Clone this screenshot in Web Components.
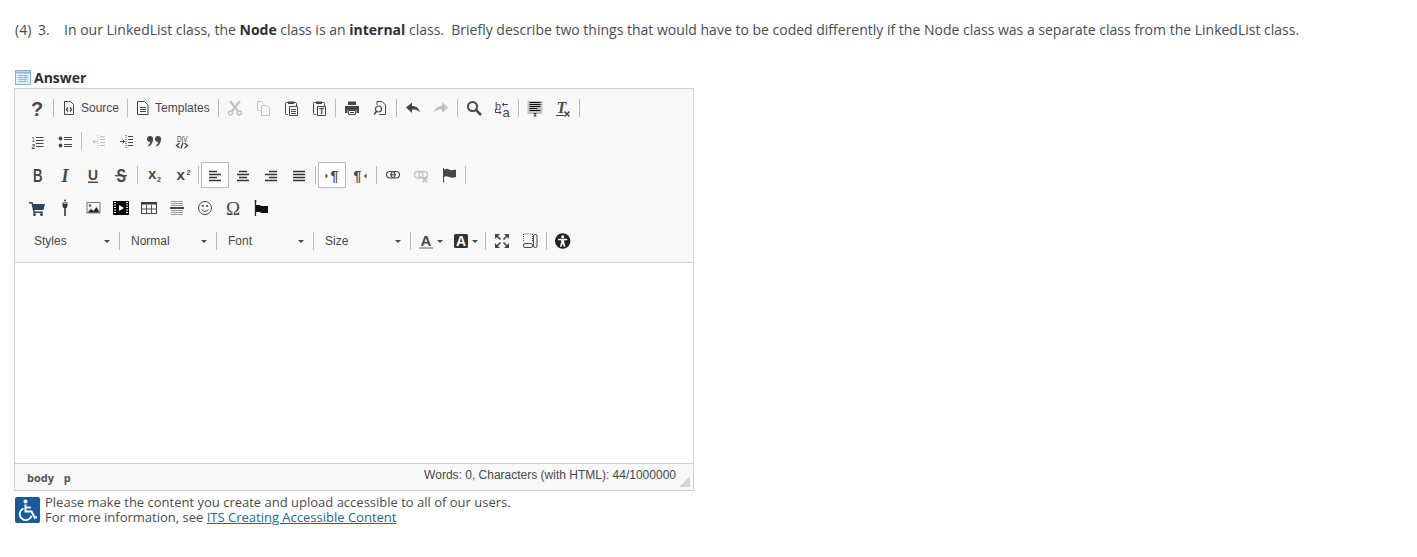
<!DOCTYPE html>
<html lang="en">
<head>
<meta charset="utf-8">
<title>Question</title>
<style>
    html, body { margin: 0; padding: 0; background: #fff; }
    body { font-family: "Open Sans", sans-serif; color: #494c4e; }
</style>
</head>
<body>

<template id="quiz-question-template">
    <style>
        :host { display: block; padding: 20px 0 0 15px; height: 30px; font-size: 14px; line-height: 20px; }
        .row { display: flex; }
        .points { width: 23px; }
        .num { width: 26px; }
        ::slotted(b) { color: #2d2f31; }
    </style>
    <div class="row">
        <span class="points">(4)</span>
        <span class="num">3.</span>
        <span><slot></slot></span>
    </div>
</template>

<template id="answer-label-template">
    <style>
        :host { display: flex; align-items: center; gap: 3px; height: 20px; margin: 17px 0 1px 15px; font-size: 14px; font-weight: 700; color: #2d2f31; }
    </style>
    <svg width="16" height="16" viewBox="0 0 16 16">
        <rect x="0.5" y="1.5" width="15" height="14" fill="#e6f0fa" stroke="#86aed6"/>
        <path d="M1 3.5h14" stroke="#8db5dc" stroke-width="2"/>
        <path d="M3 6.5h10M3 8.5h10M3 10.5h10M3 12.5h10M6 5.5v8M10 5.5v8" stroke="#9cbcdc"/>
    </svg>
    <slot></slot>
</template>

<template id="tb-button-template">
    <style>
        :host { display: inline-flex; align-items: center; justify-content: center; box-sizing: border-box; width: 28px; height: 26px; flex: none; }
        :host([label]) { width: auto; justify-content: flex-start; padding: 0 6px 0 5px; gap: 4px; }
        :host([label]) slot { display: block; margin-bottom: 1px; }
        :host([on]) { background: #fff; border: 1px solid #bcbcbc; }
        :host([disabled]) .ic { opacity: 0.3; }
        :host([caret]) { width: 35px; justify-content: flex-start; padding-left: 5px; gap: 3px; }
        .caret { display: none; width: 0; height: 0; border: 3px solid transparent; border-top-color: #484848; border-bottom: 0; }
        :host([caret]) .caret { display: block; }
        slot { font: 12px "Liberation Sans", Arial, sans-serif; color: #484848; }
    </style>
    <tb-icon class="ic"></tb-icon><slot></slot><span class="caret"></span>
</template>

<template id="tb-sep-template">
    <style>
        :host { display: block; flex: none; width: 1px; height: 18px; margin: 0 2px; background: #bcbcbc; }
    </style>
</template>

<template id="tb-row-template">
    <style>
        :host { display: flex; align-items: center; height: 26px; }
    </style>
    <slot></slot>
</template>

<template id="tb-combo-template">
    <style>
        :host { display: flex; align-items: center; box-sizing: border-box; flex: none; width: 92px; height: 26px; padding-left: 9px; font: 12px "Liberation Sans", Arial, sans-serif; color: #484848; }
        .text { flex: 1; }
        .arrow { width: 0; height: 0; margin-right: 7px; border: 3px solid transparent; border-top-color: #484848; border-bottom: 0; }
    </style>
    <span class="text"><slot></slot></span>
    <span class="arrow"></span>
</template>

<template id="html-editor-template">
    <style>
        :host { display: block; box-sizing: border-box; width: 680px; margin-left: 14px; border: 1px solid #d1d1d1; }
        .toolbar { display: flex; flex-direction: column; gap: 7px; box-sizing: border-box; height: 174px; padding: 6px 0 0 8px; background: #f8f8f8; border-bottom: 1px solid #d1d1d1; }
        ::slotted(tb-row:nth-of-type(3)) { margin-top: 1px; }
        ::slotted(tb-row:nth-of-type(5)) { padding-left: 2px; }
        .content { height: 200px; background: #fff; border-bottom: 1px solid #d1d1d1; }
        .bottom { position: relative; display: flex; align-items: center; justify-content: space-between; box-sizing: border-box; height: 26px; padding: 0 17px 0 12px; background: #f8f8f8; }
        .path { font: 700 11px "Open Sans", sans-serif; color: #555; word-spacing: 7px; }
        .count { font: 12px "Liberation Sans", Arial, sans-serif; color: #484848; margin-top: -5px; }
        .grip { position: absolute; right: 3px; bottom: 3px; width: 0; height: 0; border-style: solid; border-width: 0 0 11px 11px; border-color: transparent transparent #d4d4d4 transparent; }
    </style>
    <div class="toolbar"><slot></slot></div>
    <div class="content"></div>
    <div class="bottom">
        <span class="path">body p</span>
        <span class="count"><slot name="count"></slot></span>
        <span class="grip"></span>
    </div>
</template>

<template id="access-note-template">
    <style>
        :host { display: flex; gap: 5px; margin: 4px 0 0 15px; font-size: 13px; line-height: 15px; color: #494c4e; }
        svg { flex: none; margin-top: 2px; }
        ::slotted(a) { color: #146a9a; }
    </style>
    <svg width="25" height="26" viewBox="0 0 25 26">
        <rect width="25" height="26" rx="2" fill="#1c5a9e"/>
        <circle cx="10.5" cy="4.5" r="2" fill="#fff"/>
        <path d="M10.5 7.5v7h6l3.4 6.4 2-1" fill="none" stroke="#fff" stroke-width="2"/>
        <path d="M10.8 10.5h5" stroke="#fff" stroke-width="1.8"/>
        <path d="M8.5 11.5a6 6 0 1 0 8 7.3" fill="none" stroke="#fff" stroke-width="1.8"/>
    </svg>
    <div><slot></slot></div>
</template>

<quiz-question>In our LinkedList class, the <b>Node</b> class is an <b>internal</b> class.&nbsp; Briefly describe two things that would have to be coded differently if the Node class was a separate class from the LinkedList class.</quiz-question>

<answer-label>Answer</answer-label>

<html-editor>
    <tb-row>
        <tb-button icon="help"></tb-button><tb-sep></tb-sep>
        <tb-button icon="source" label>Source</tb-button><tb-sep></tb-sep>
        <tb-button icon="templates" label>Templates</tb-button><tb-sep></tb-sep>
        <tb-button icon="cut" disabled></tb-button>
        <tb-button icon="copy" disabled></tb-button>
        <tb-button icon="paste"></tb-button>
        <tb-button icon="pastetext"></tb-button><tb-sep></tb-sep>
        <tb-button icon="print"></tb-button>
        <tb-button icon="preview"></tb-button><tb-sep></tb-sep>
        <tb-button icon="undo"></tb-button>
        <tb-button icon="redo" disabled></tb-button><tb-sep></tb-sep>
        <tb-button icon="find"></tb-button>
        <tb-button icon="replace"></tb-button><tb-sep></tb-sep>
        <tb-button icon="selectall"></tb-button>
        <tb-button icon="removeformat"></tb-button><tb-sep></tb-sep>
    </tb-row>
    <tb-row>
        <tb-button icon="numlist"></tb-button>
        <tb-button icon="bullist"></tb-button><tb-sep></tb-sep>
        <tb-button icon="outdent" disabled></tb-button>
        <tb-button icon="indent"></tb-button>
        <tb-button icon="quote"></tb-button>
        <tb-button icon="creatediv"></tb-button>
    </tb-row>
    <tb-row>
        <tb-button icon="bold"></tb-button>
        <tb-button icon="italic"></tb-button>
        <tb-button icon="underline"></tb-button>
        <tb-button icon="strike"></tb-button><tb-sep></tb-sep>
        <tb-button icon="sub"></tb-button>
        <tb-button icon="sup"></tb-button><tb-sep></tb-sep>
        <tb-button icon="alignleft" on></tb-button>
        <tb-button icon="aligncenter"></tb-button>
        <tb-button icon="alignright"></tb-button>
        <tb-button icon="alignjustify"></tb-button><tb-sep></tb-sep>
        <tb-button icon="ltr" on></tb-button>
        <tb-button icon="rtl"></tb-button><tb-sep></tb-sep>
        <tb-button icon="link"></tb-button>
        <tb-button icon="unlink" disabled></tb-button>
        <tb-button icon="anchor"></tb-button><tb-sep></tb-sep>
    </tb-row>
    <tb-row>
        <tb-button icon="cart"></tb-button>
        <tb-button icon="mic"></tb-button>
        <tb-button icon="image"></tb-button>
        <tb-button icon="film"></tb-button>
        <tb-button icon="table"></tb-button>
        <tb-button icon="hr"></tb-button>
        <tb-button icon="smiley"></tb-button>
        <tb-button icon="omega"></tb-button>
        <tb-button icon="flag"></tb-button>
    </tb-row>
    <tb-row>
        <tb-combo>Styles</tb-combo><tb-sep></tb-sep>
        <tb-combo>Normal</tb-combo><tb-sep></tb-sep>
        <tb-combo>Font</tb-combo><tb-sep></tb-sep>
        <tb-combo>Size</tb-combo><tb-sep></tb-sep>
        <tb-button icon="textcolor" caret></tb-button>
        <tb-button icon="bgcolor" caret></tb-button><tb-sep></tb-sep>
        <tb-button icon="maximize"></tb-button>
        <tb-button icon="showblocks"></tb-button><tb-sep></tb-sep>
        <tb-button icon="a11y"></tb-button>
    </tb-row>
    <span slot="count">Words: 0, Characters (with HTML): 44/1000000</span>
</html-editor>

<access-note>Please make the content you create and upload accessible to all of our users.<br>For more information, see <a href="#">ITS Creating Accessible Content</a></access-note>

<script type="module">
    const SANS = 'font-family="Liberation Sans, sans-serif"';
    const SERIF = 'font-family="Liberation Serif, serif"';
    const CLIP = `<path d="M5 2.5H3.5q-1 0-1 1v10q0 1 1 1H5" fill="none" stroke="currentColor"/><path d="M5 1.5h6V4H5z" fill="currentColor"/><path d="M11 2.5h1.5q1 0 1 1V6" fill="none" stroke="currentColor"/><path d="M6.5 6.5h8v9h-8z" fill="none" stroke="currentColor"/>`;
    // 16x16 toolbar icons, everything is drawn in currentColor unless it has its own colour
    const ICONS = {
        help: `<text x="8" y="15.5" text-anchor="middle" ${SANS} font-weight="700" font-size="20">?</text>`,
        source: `<path d="M3.5 1.5h6l3 3v10h-9z" fill="none" stroke="currentColor"/><path d="M7 7.5L5.5 9.5 7 11.5M9 7.5l1.5 2-1.5 2" fill="none" stroke="currentColor" stroke-width="1.3"/>`,
        templates: `<path d="M2.5 1.5h7l3.5 3.5v9.5H2.5z" fill="none" stroke="currentColor"/><path d="M5 7.5h6M5 9.5h6M5 11.5h6" stroke="currentColor"/>`,
        cut: `<path d="M3 1l8 10M13 1L5 11" stroke="currentColor" stroke-width="2.2"/><circle cx="3.5" cy="13" r="2" fill="none" stroke="currentColor" stroke-width="1.4"/><circle cx="12.5" cy="13" r="2" fill="none" stroke="currentColor" stroke-width="1.4"/>`,
        copy: `<path d="M2.5 1.5h4l2 2M2.5 1.5v9h3" fill="none" stroke="currentColor"/><path d="M6.5 5.5h5l3 3v7h-8z" fill="none" stroke="currentColor"/>`,
        paste: `${CLIP}<path d="M8 9.5h5M8 11.5h5M8 13.5h5" stroke="currentColor"/>`,
        pastetext: `${CLIP}<text x="10.5" y="14" text-anchor="middle" ${SANS} font-weight="700" font-size="8.5">T</text>`,
        print: `<path d="M4 1.5h8V5H4zM1 6h14v7h-2.5v-3h-9v3H1z" fill="currentColor"/><path d="M4.5 10.5h7v4h-7z" fill="none" stroke="currentColor"/><path d="M6 12.5h4" stroke="currentColor"/>`,
        preview: `<path d="M5 1.5h5l3.5 3.5v9.5H7" fill="none" stroke="currentColor"/><path d="M5 1.5V5" stroke="currentColor"/><circle cx="6.5" cy="9" r="3" fill="none" stroke="currentColor" stroke-width="1.2"/><path d="M4.5 11.5L2 14.5" stroke="currentColor" stroke-width="1.5"/>`,
        undo: `<path d="M1 7.5L7 2.5V6c4 0 7 2 8 6.5-2-2.5-4.5-3-8-3V13z" fill="currentColor"/>`,
        redo: `<path d="M15 7.5L9 2.5V6C5 6 2 8 1 12.5c2-2.5 4.5-3 8-3V13z" fill="currentColor"/>`,
        find: `<circle cx="6.5" cy="6.5" r="4.5" fill="none" stroke="currentColor" stroke-width="2"/><path d="M10 10l5 5" stroke="currentColor" stroke-width="2.5"/>`,
        replace: `<text x="1" y="10" ${SANS} font-size="11">b</text><text x="8.5" y="17" ${SANS} font-size="13">a</text><path d="M14 4.5H8.5M10 3L8.5 4.5 10 6M1.5 9v3.5H7M5.5 11L7 12.5 5.5 14" fill="none" stroke="currentColor"/>`,
        selectall: `<rect x="0.5" y="1" width="15" height="13" fill="#c4c4c4"/><path d="M2.5 2.5h11M2.5 4.5h11M2.5 6.5h11M2.5 8.5h8M2.5 10.5h11" stroke="#111"/><path d="M6.5 13.5h3M8 13.5v2.5M6.5 16h3" stroke="#1c1c1c" stroke-width="0.9"/>`,
        removeformat: `<text x="1.5" y="13" ${SERIF} font-style="italic" font-weight="700" font-size="16">T</text><path d="M1 15.5h8" stroke="currentColor"/><path d="M9.5 11.5l5 5M14.5 11.5l-5 5" stroke="currentColor" stroke-width="1.6"/>`,
        numlist: `<text x="2.5" y="8.5" ${SANS} font-size="6.5">1</text><text x="2.5" y="15.5" ${SANS} font-weight="700" font-size="6.5">2</text><path d="M7 4.5h7.5M7 7.5h7.5M7 10.5h7.5M7 13.5h7.5" stroke="currentColor"/>`,
        bullist: `<circle cx="3.5" cy="5.5" r="1.9" fill="currentColor"/><circle cx="3.5" cy="12.5" r="1.9" fill="currentColor"/><path d="M7 4.5h8M7 6.5h8M7 11.5h8M7 13.5h8" stroke="currentColor"/>`,
        outdent: `<path d="M8 2v13" stroke="currentColor" stroke-dasharray="1 1"/><path d="M7 8.5H3M5 6.5L3 8.5l2 2" fill="none" stroke="currentColor"/><path d="M10 3.5h5M10 6.5h5M10 9.5h5M10 12.5h5" stroke="currentColor"/>`,
        indent: `<path d="M8 2v13" stroke="currentColor" stroke-dasharray="1 1"/><path d="M2 8.5h4M4.5 6.5L6.5 8.5l-2 2" fill="none" stroke="currentColor"/><path d="M10 3.5h5M10 6.5h5M10 9.5h5M10 12.5h5" stroke="currentColor"/>`,
        quote: `<circle cx="4" cy="6" r="3" fill="currentColor"/><path d="M7 6q0 5-4 7.5l-1-1q2-1.5 2.5-4z" fill="currentColor"/><circle cx="12" cy="6" r="3" fill="currentColor"/><path d="M15 6q0 5-4 7.5l-1-1q2-1.5 2.5-4z" fill="currentColor"/>`,
        creatediv: `<text x="3" y="8.5" ${SANS} font-size="9.5" textLength="10.5" lengthAdjust="spacingAndGlyphs">DIV</text><path d="M5.5 10L2.5 12.5 5.5 15M10.5 10l3 2.5-3 2.5M9 9.5L7 15.5" fill="none" stroke="currentColor" stroke-width="1.4"/>`,
        bold: `<text x="4" y="15" ${SANS} font-weight="700" font-size="17.5" textLength="9.5" lengthAdjust="spacingAndGlyphs">B</text>`,
        italic: `<text x="8" y="14.5" text-anchor="middle" ${SERIF} font-style="italic" font-weight="700" font-size="18">I</text>`,
        underline: `<text x="3" y="12.5" ${SANS} font-weight="700" font-size="15.5" textLength="10" lengthAdjust="spacingAndGlyphs">U</text><path d="M3 15.2h10" stroke="currentColor" stroke-width="1.5"/>`,
        strike: `<text x="3.5" y="15" ${SANS} font-weight="700" font-size="17.5" textLength="9.5" lengthAdjust="spacingAndGlyphs">S</text><path d="M2 8.7h12" stroke="currentColor" stroke-width="1.3"/>`,
        sub: `<text x="2" y="12" ${SANS} font-weight="700" font-size="15">x</text><text x="11" y="15" ${SANS} font-weight="700" font-size="7">2</text>`,
        sup: `<text x="2.5" y="13" ${SANS} font-weight="700" font-size="15">x</text><text x="12.5" y="8" ${SANS} font-weight="700" font-size="7">2</text>`,
        alignleft: `<path d="M2 4.5h8M2 7.5h12M2 10.5h8M2 13.5h12" stroke="#333" stroke-width="1.6"/>`,
        aligncenter: `<path d="M4 4.5h8M2 7.5h12M4 10.5h8M2 13.5h12" stroke="#333" stroke-width="1.6"/>`,
        alignright: `<path d="M6 4.5h8M2 7.5h12M6 10.5h8M2 13.5h12" stroke="#333" stroke-width="1.6"/>`,
        alignjustify: `<path d="M2 4.5h12M2 7.5h12M2 10.5h12M2 13.5h12" stroke="#333" stroke-width="1.6"/>`,
        ltr: `<path d="M1.5 6.5v5L4 9z" fill="currentColor"/><text x="10.5" y="13.5" text-anchor="middle" ${SANS} font-weight="700" font-size="14">¶</text>`,
        rtl: `<path d="M14.5 6.5v5L12 9z" fill="currentColor"/><text x="5.5" y="13.5" text-anchor="middle" ${SANS} font-weight="700" font-size="14">¶</text>`,
        link: `<rect x="1.5" y="4.5" width="8.5" height="6.5" rx="3.2" fill="none" stroke="currentColor" stroke-width="1.2"/><rect x="6" y="4.5" width="8.5" height="6.5" rx="3.2" fill="none" stroke="currentColor" stroke-width="1.2"/><path d="M5 7.7h6" stroke="currentColor" stroke-width="1.2"/>`,
        unlink: `<rect x="1.5" y="4.5" width="8.5" height="6.5" rx="3.2" fill="none" stroke="currentColor" stroke-width="1.3"/><rect x="6" y="4.5" width="8.5" height="6.5" rx="3.2" fill="none" stroke="currentColor" stroke-width="1.3"/><path d="M9.5 10.5l5 5M14.5 10.5l-5 5" stroke="currentColor" stroke-width="1.5"/>`,
        anchor: `<path d="M2.5 1v14.5" stroke="currentColor"/><path d="M3 2.5q3-1.500 5 0t7 0V10q-4 1.500-7 0t-5 0z" fill="currentColor"/>`,
        cart: `<path d="M0 2h3.5l.7 2H16l-1.5 6H5.5l.3 1.500H14V13H4.500L2.500 3.500H0z" fill="#2a4560"/><circle cx="5.500" cy="14.500" r="1.500" fill="#2a4560"/><circle cx="12.500" cy="14.500" r="1.500" fill="#2a4560"/>`,
        mic: `<circle cx="8" cy="0.5" r="1" fill="#444"/><path d="M5.500 2.500h5V6l-1 2h-3l-1-2z" fill="#333"/><path d="M6.500 3.500h3" stroke="#bbb"/><path d="M7.200 8h1.600v8H7.200z" fill="#2a3a4a"/>`,
        image: `<rect x="2" y="2.5" width="13" height="10.5" fill="#f4f4f4" stroke="#777"/><circle cx="5" cy="5.5" r="1.2" fill="#555"/><path d="M2.5 12.5l3.500-3.500 2.500 2 3-4 3 5.500z" fill="#222"/>`,
        film: `<rect x="0" y="1" width="16" height="14" fill="#000"/><path d="M1 2.5h2M1 5h2M1 7.5h2M1 10h2M1 12.5h2M13 2.5h2M13 5h2M13 7.5h2M13 10h2M13 12.5h2" stroke="#fff" stroke-width="1"/><path d="M6 5l5 3-5 3z" fill="#fff"/>`,
        table: `<rect x="0.5" y="2.5" width="15" height="11" fill="none" stroke="#444"/><path d="M0 3.5h16" stroke="#333" stroke-width="2"/><path d="M0.5 9h15M5.5 5v8.5M10.5 5v8.5" stroke="#555"/>`,
        hr: `<path d="M2 1.5h12M2 3.5h12M2 5.5h12M2 10.5h12M2 12.5h12M2 14.5h12" stroke="#999"/><path d="M1 8h14" stroke="#333" stroke-width="1.8"/>`,
        smiley: `<circle cx="8" cy="8" r="6.5" fill="none" stroke="currentColor"/><circle cx="5.8" cy="6" r="1.1" fill="currentColor"/><circle cx="10.2" cy="6" r="1.1" fill="currentColor"/><path d="M4.5 9.5q3.5 3.8 7 0" fill="none" stroke="currentColor"/>`,
        omega: `<text x="8" y="14.5" text-anchor="middle" ${SERIF} font-size="19">Ω</text>`,
        flag: `<path d="M2.5 1v15" stroke="#222" stroke-width="1.3"/><circle cx="2.5" cy="1" r="1" fill="#222"/><path d="M3 5h4l1 1h7v7H8l-1-1H3z" fill="#111"/>`,
        textcolor: `<text x="8" y="12.5" text-anchor="middle" ${SANS} font-weight="700" font-size="15">A</text><path d="M1 15h14" stroke="#999" stroke-width="1.6"/>`,
        bgcolor: `<rect x="1" y="1" width="14" height="14" rx="1.5" fill="#333"/><text x="8" y="13" text-anchor="middle" ${SANS} font-weight="700" font-size="14" fill="#fff">A</text>`,
        maximize: `<path d="M1 1h5L1 6zM15 1v5l-5-5zM1 15v-5l5 5zM15 15h-5l5-5z" fill="currentColor"/><path d="M2.5 2.5l4 4M13.5 2.5l-4 4M2.5 13.5l4-4M13.5 13.5l-4-4" stroke="currentColor" stroke-width="1.7"/>`,
        showblocks: `<path d="M1.5 1h9M1.5 1v8M10.5 1v8" stroke="currentColor" stroke-dasharray="1 1"/><rect x="1.5" y="10.5" width="9" height="4" rx="1.5" fill="none" stroke="currentColor"/><rect x="11.5" y="1.5" width="3.5" height="13" rx="1.5" fill="none" stroke="currentColor"/>`,
        a11y: `<circle cx="7.7" cy="8" r="7.7" fill="#222"/><circle cx="7.7" cy="3.7" r="1.5" fill="#fff"/><path d="M3.200 5.800h9v1.500H9.200v2l1.300 4.500H8.900L7.700 10.500 6.500 13.800H4.900l1.300-4.500v-2h-3z" fill="#fff"/>`,
    };

    // Shared by every element: clone a template into an open shadow root
    function attach(el, id) {
        const root = el.attachShadow({mode: 'open'});
        root.appendChild(document.getElementById(id).content.cloneNode(true));
        return root;
    }

    class TbIcon extends HTMLElement {
        constructor() {
            super();
            this.attachShadow({mode: 'open'});
        }

        set name(value) {
            this.shadowRoot.innerHTML = `
                <style>
                    :host { display: block; width: 16px; height: 16px; color: #474747; flex: none; }
                    svg { display: block; overflow: visible; }
                    text { fill: currentColor; }
                    text[fill] { fill: #fff; }
                </style>
                <svg width="16" height="16" viewBox="0 0 16 16">${ICONS[value] || ''}</svg>`;
        }
    }
    customElements.define('tb-icon', TbIcon);

    class TbButton extends HTMLElement {
        constructor() {
            super();
            this.root = attach(this, 'tb-button-template');
        }

        connectedCallback() {
            this.root.querySelector('tb-icon').name = this.getAttribute('icon');
        }
    }
    customElements.define('tb-button', TbButton);

    // The rest only need their template
    const plain = {
        'quiz-question': 'quiz-question-template',
        'answer-label': 'answer-label-template',
        'tb-sep': 'tb-sep-template',
        'tb-row': 'tb-row-template',
        'tb-combo': 'tb-combo-template',
        'html-editor': 'html-editor-template',
        'access-note': 'access-note-template',
    };
    for (const [tag, id] of Object.entries(plain)) {
        customElements.define(tag, class extends HTMLElement {
            constructor() {
                super();
                attach(this, id);
            }
        });
    }
</script>
</body>
</html>
